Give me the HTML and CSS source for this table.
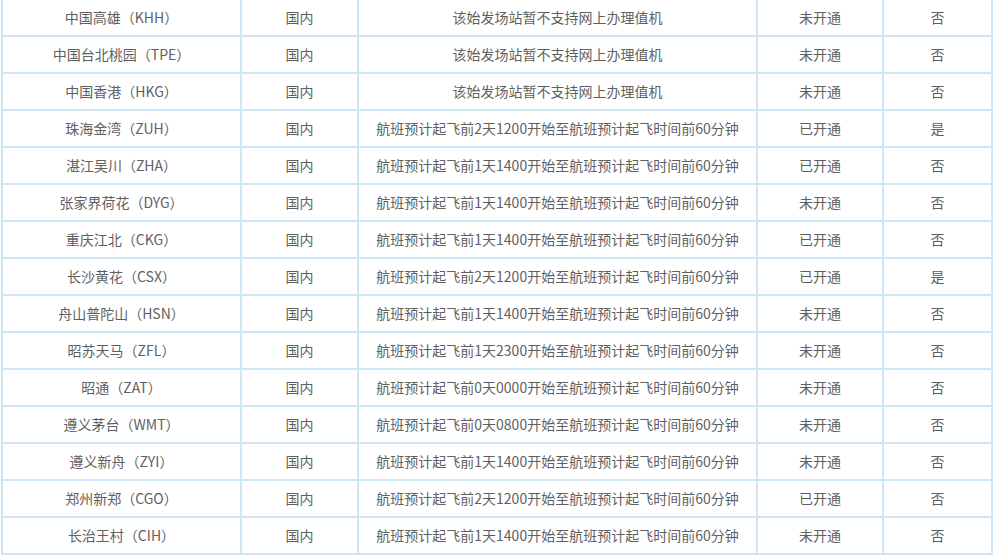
FILE: index.html
```html
<!DOCTYPE html>
<html lang="zh-CN">
<head>
<meta charset="utf-8">
<title>值机开通情况</title>
<link rel="stylesheet" href="styles.css">
</head>
<body>
<table class="grid">
  <colgroup>
    <col class="c1"><col class="c2"><col class="c3"><col class="c4"><col class="c5">
  </colgroup>
  <tbody>
    <tr><td>中国高雄（KHH）</td><td>国内</td><td>该始发场站暂不支持网上办理值机</td><td>未开通</td><td>否</td></tr>
    <tr><td>中国台北桃园（TPE）</td><td>国内</td><td>该始发场站暂不支持网上办理值机</td><td>未开通</td><td>否</td></tr>
    <tr><td>中国香港（HKG）</td><td>国内</td><td>该始发场站暂不支持网上办理值机</td><td>未开通</td><td>否</td></tr>
    <tr><td>珠海金湾（ZUH）</td><td>国内</td><td>航班预计起飞前2天1200开始至航班预计起飞时间前60分钟</td><td>已开通</td><td>是</td></tr>
    <tr><td>湛江吴川（ZHA）</td><td>国内</td><td>航班预计起飞前1天1400开始至航班预计起飞时间前60分钟</td><td>已开通</td><td>否</td></tr>
    <tr><td>张家界荷花（DYG）</td><td>国内</td><td>航班预计起飞前1天1400开始至航班预计起飞时间前60分钟</td><td>未开通</td><td>否</td></tr>
    <tr><td>重庆江北（CKG）</td><td>国内</td><td>航班预计起飞前1天1400开始至航班预计起飞时间前60分钟</td><td>已开通</td><td>否</td></tr>
    <tr><td>长沙黄花（CSX）</td><td>国内</td><td>航班预计起飞前2天1200开始至航班预计起飞时间前60分钟</td><td>已开通</td><td>是</td></tr>
    <tr><td>舟山普陀山（HSN）</td><td>国内</td><td>航班预计起飞前1天1400开始至航班预计起飞时间前60分钟</td><td>未开通</td><td>否</td></tr>
    <tr><td>昭苏天马（ZFL）</td><td>国内</td><td>航班预计起飞前1天2300开始至航班预计起飞时间前60分钟</td><td>未开通</td><td>否</td></tr>
    <tr><td>昭通（ZAT）</td><td>国内</td><td>航班预计起飞前0天0000开始至航班预计起飞时间前60分钟</td><td>未开通</td><td>否</td></tr>
    <tr><td>遵义茅台（WMT）</td><td>国内</td><td>航班预计起飞前0天0800开始至航班预计起飞时间前60分钟</td><td>未开通</td><td>否</td></tr>
    <tr><td>遵义新舟（ZYI）</td><td>国内</td><td>航班预计起飞前1天1400开始至航班预计起飞时间前60分钟</td><td>未开通</td><td>否</td></tr>
    <tr><td>郑州新郑（CGO）</td><td>国内</td><td>航班预计起飞前2天1200开始至航班预计起飞时间前60分钟</td><td>已开通</td><td>否</td></tr>
    <tr><td>长治王村（CIH）</td><td>国内</td><td>航班预计起飞前1天1400开始至航班预计起飞时间前60分钟</td><td>未开通</td><td>否</td></tr>
  </tbody>
</table>
</body>
</html>
```
FILE: styles.css
```css
html, body {
  margin: 0;
  padding: 0;
  background: #ffffff;
}
body {
  font-family: "Noto Sans CJK SC", "Noto Sans", sans-serif;
  font-size: 14px;
  color: #5f5f5f;
  overflow: hidden;
}
.grid {
  border-collapse: collapse;
  table-layout: fixed;
  width: 992px;
  margin: -2px 0 0 1px;
}
.c1 { width: 239px; }
.c2 { width: 117px; }
.c3 { width: 399px; }
.c4 { width: 126px; }
.c5 { width: 109px; }
.grid td {
  border: 2px solid #cfe6f5;
  height: 33px;
  padding: 0 0 2px 0;
  text-align: center;
  vertical-align: middle;
  line-height: 20px;
  white-space: nowrap;
}
```
